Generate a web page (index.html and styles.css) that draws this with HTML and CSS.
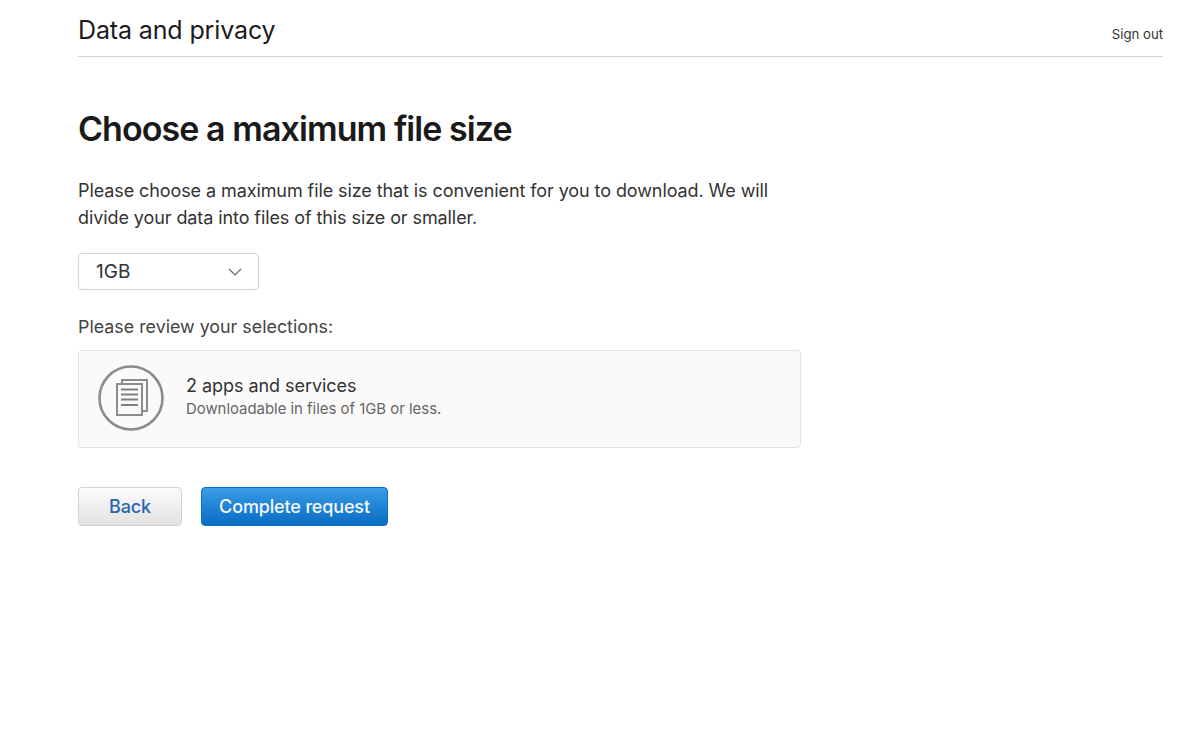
FILE: index.html
```html
<!DOCTYPE html>
<html lang="en">
<head>
  <meta charset="UTF-8">
  <meta name="viewport" content="width=device-width, initial-scale=1.0">
  <title>Data and privacy</title>
  <link rel="stylesheet" href="styles.css">
</head>
<body>
  <div class="container">
    <header class="top-bar">
      <div class="app-title">Data and privacy</div>
      <a class="sign-out" href="#">Sign out</a>
    </header>

    <main class="content">
      <h1>Choose a maximum file size</h1>
      <p class="intro">Please choose a maximum file size that is convenient for you to download. We will divide your data into files of this size or smaller.</p>

      <div class="size-select">
        <span>1GB</span>
        <svg width="14" height="8" viewBox="0 0 14 8"><path d="M1 1l6 6 6-6" fill="none" stroke="#666" stroke-width="1.2"/></svg>
      </div>

      <p class="review-label">Please review your selections:</p>

      <div class="summary">
        <svg class="summary-icon" width="66" height="66" viewBox="0 0 66 66">
          <circle cx="33" cy="33" r="31.500" fill="none" stroke="#8c8c8c" stroke-width="2.600"/>
          <path d="M24 19V15H49V46H44" fill="none" stroke="#8c8c8c" stroke-width="2"/>
          <rect x="19" y="19" width="25" height="31" fill="#fafafa" stroke="#8c8c8c" stroke-width="2"/>
          <path d="M23 24.500H40M23 29.500H40M23 34.500H40M23 40H40" fill="none" stroke="#7f7f7f" stroke-width="2"/>
        </svg>
        <div class="summary-text">
          <div class="summary-title">2 apps and services</div>
          <div class="summary-sub">Downloadable in files of 1GB or less.</div>
        </div>
      </div>

      <div class="actions">
        <button class="btn btn-back">Back</button>
        <button class="btn btn-primary">Complete request</button>
      </div>
    </main>
  </div>
</body>
</html>
```

FILE: styles.css
```css
* {
  box-sizing: border-box;
}
body {
  margin: 0;
  background-color: #fff;
  color: #222;
  font-family: Inter, "Liberation Sans", sans-serif;
}
.container {
  margin-left: 78px;
  width: 1085px;
}
.top-bar {
  display: flex;
  justify-content: space-between;
  align-items: flex-end;
  height: 57px;
  padding-bottom: 11px;
  border-bottom: 1px solid #d2d2d2;
}
.app-title {
  font-size: 25px;
  line-height: 30px;
  letter-spacing: -0.13px;
  color: #1b1b1d;
}
.sign-out {
  font-size: 13.200px;
  line-height: 16px;
  margin-bottom: 3px;
  color: #333;
  text-decoration: none;
}
.content {
  width: 723px;
}
h1 {
  margin: 50px 0 0;
  font-size: 34px;
  line-height: 44px;
  font-weight: 600;
  letter-spacing: -0.93px;
  color: #1a1a1a;
}
.intro {
  margin: 26px 0 0;
  font-size: 18px;
  line-height: 27px;
  letter-spacing: -0.09px;
  color: #333;
}
.size-select {
  display: flex;
  justify-content: space-between;
  align-items: center;
  width: 181px;
  height: 37px;
  margin-top: 22px;
  padding: 0 16px 0 17px;
  border: 1px solid #d4d4d4;
  border-radius: 4px;
  font-size: 19px;
  color: #333;
}
.review-label {
  margin: 25px 0 0;
  font-size: 17.850px;
  line-height: 24px;
  color: #444;
}
.summary {
  display: flex;
  align-items: center;
  gap: 22px;
  height: 98px;
  margin-top: 11px;
  padding-left: 19px;
  background-color: #fafafa;
  border: 1px solid #e2e2e2;
  border-radius: 4px;
}
.summary-icon {
  margin-top: -3px;
}
.summary-text {
  margin-top: -4px;
}
.summary-title {
  font-size: 18px;
  line-height: 24px;
  letter-spacing: -0.05px;
  color: #333;
}
.summary-sub {
  font-size: 14.900px;
  line-height: 23px;
  color: #666;
}
.actions {
  display: flex;
  gap: 19px;
  margin-top: 39px;
}
.btn {
  height: 39px;
  padding: 0;
  border-radius: 4px;
  font-family: inherit;
  font-size: 18px;
  font-weight: 500;
  letter-spacing: -0.15px;
}
.btn-back {
  width: 104px;
  color: #2a66b0;
  background: linear-gradient(#fbfbfb, #e3e3e3);
  border: 1px solid #d4d4d4;
}
.btn-primary {
  width: 187px;
  color: #f2f8fd;
  background: linear-gradient(#3a9be6, #0a6cc4);
  border: 1px solid #0f6fc6;
}
```
